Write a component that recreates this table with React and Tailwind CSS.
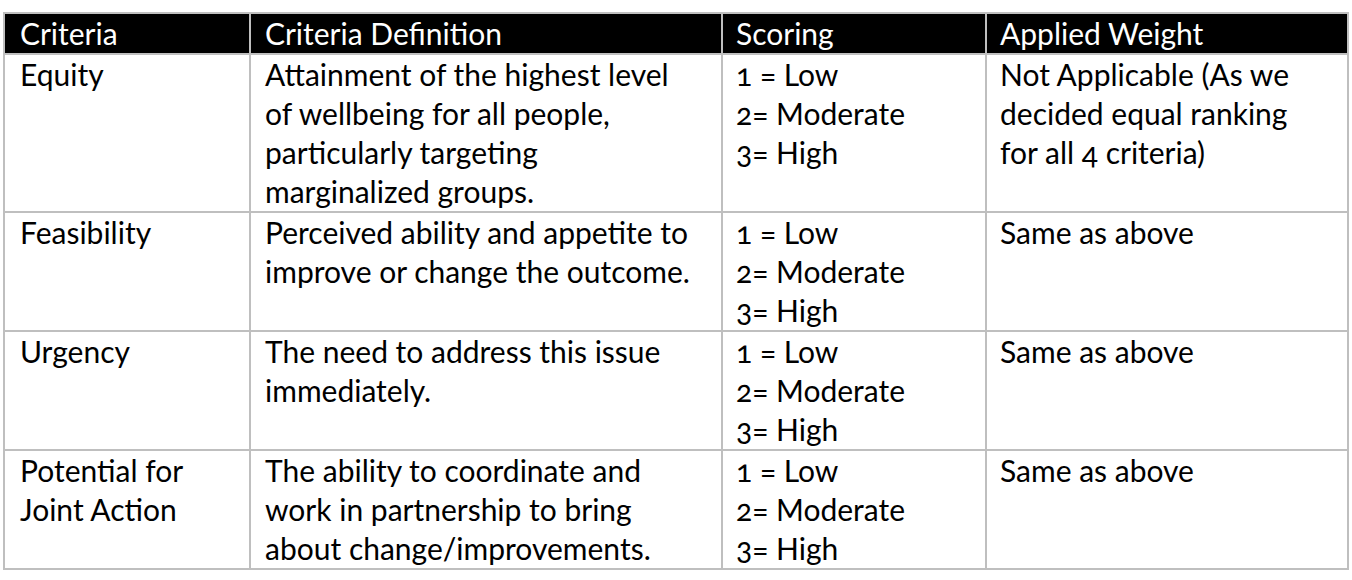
import React from "react";

const rows = [
  {
    c: ["Equity"],
    d: ["Attainment of the highest level", "of wellbeing for all people,", "particularly targeting", "marginalized groups."],
    w: ["Not Applicable (As we", "decided equal ranking", "for all 4 criteria)"],
  },
  {
    c: ["Feasibility"],
    d: ["Perceived ability and appetite to", "improve or change the outcome."],
    w: ["Same as above"],
  },
  {
    c: ["Urgency"],
    d: ["The need to address this issue", "immediately."],
    w: ["Same as above"],
  },
  {
    c: ["Potential for", "Joint Action"],
    d: ["The ability to coordinate and", "work in partnership to bring", "about change/improvements."],
    w: ["Same as above"],
  },
];

const scoring = ["1 = Low", "2= Moderate", "3= High"];

function Lines({ lines }) {
  return lines.map((l, i) => <div key={i} className="whitespace-nowrap">{l}</div>);
}

export default function App() {
  return (
    <div className="bg-white w-[1352px] h-[580px] pt-[12px] pl-[3px]" style={{ fontFamily: "Lato, 'Open Sans', sans-serif" }}>
      <table className="table-fixed border-collapse w-[1344px] text-[30px] leading-[39px] text-black oldstyle-nums">
        <colgroup>
          <col className="w-[246px]" />
          <col className="w-[472px]" />
          <col className="w-[264px]" />
          <col className="w-[362px]" />
        </colgroup>
        <thead>
          <tr className="bg-black text-white">
            <th className="border-2 border-[#bfbfbf] text-left font-normal align-top pl-[15px]">Criteria</th>
            <th className="border-2 border-[#bfbfbf] text-left font-normal align-top pl-[14px]">Criteria Definition</th>
            <th className="border-2 border-[#bfbfbf] text-left font-normal align-top pl-[13px]">Scoring</th>
            <th className="border-2 border-[#bfbfbf] text-left font-normal align-top pl-[13px]">Applied Weight</th>
          </tr>
        </thead>
        <tbody>
          {rows.map((r, i) => (
            <tr key={i}>
              <td className="border-2 border-[#bfbfbf] align-top pl-[15px]"><Lines lines={r.c} /></td>
              <td className="border-2 border-[#bfbfbf] align-top pl-[14px]"><Lines lines={r.d} /></td>
              <td className="border-2 border-[#bfbfbf] align-top pl-[13px]"><Lines lines={scoring} /></td>
              <td className="border-2 border-[#bfbfbf] align-top pl-[13px]"><Lines lines={r.w} /></td>
            </tr>
          ))}
        </tbody>
      </table>
    </div>
  );
}
